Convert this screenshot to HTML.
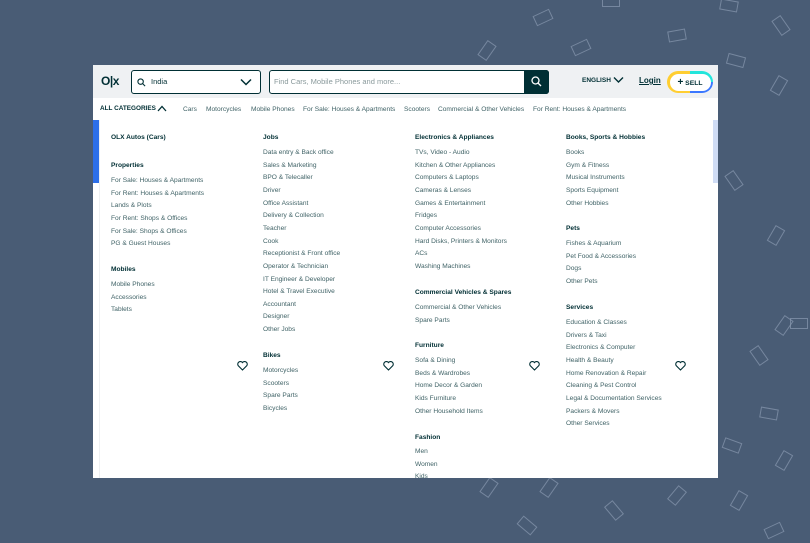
<!DOCTYPE html>
<html><head><meta charset="utf-8"><style>
*{margin:0;padding:0;box-sizing:border-box}
body{width:810px;height:543px;background:#495c75;font-family:"Liberation Sans",sans-serif;position:relative;overflow:hidden}
.r{position:absolute;border:1.5px solid #8a9ab0;opacity:.7;width:18px;height:11px}
#p{position:absolute;left:93px;top:65px;width:625px;height:413px;background:#fff}
#hd{position:absolute;left:0;top:0;width:625px;height:33px;background:#eff1f3}
.t{position:absolute;font-size:6.6px;color:#406367;white-space:nowrap}
.h{position:absolute;font-size:6.6px;color:#002f34;font-weight:bold;white-space:nowrap}
.n{position:absolute;font-size:6.6px;color:#406367;white-space:nowrap;top:40px}
</style></head><body>
<div class="r" style="left:534px;top:12px;transform:rotate(-25deg)"></div>
<div class="r" style="left:478px;top:45px;transform:rotate(-55deg)"></div>
<div class="r" style="left:572px;top:42px;transform:rotate(-25deg)"></div>
<div class="r" style="left:668px;top:30px;transform:rotate(-10deg)"></div>
<div class="r" style="left:727px;top:55px;transform:rotate(15deg)"></div>
<div class="r" style="left:772px;top:20px;transform:rotate(55deg)"></div>
<div class="r" style="left:770px;top:80px;transform:rotate(-60deg)"></div>
<div class="r" style="left:720px;top:0px;transform:rotate(10deg)"></div>
<div class="r" style="left:602px;top:-4px;transform:rotate(0deg)"></div>
<div class="r" style="left:725px;top:175px;transform:rotate(55deg)"></div>
<div class="r" style="left:767px;top:230px;transform:rotate(-60deg)"></div>
<div class="r" style="left:775px;top:320px;transform:rotate(-55deg)"></div>
<div class="r" style="left:790px;top:318px;transform:rotate(0deg)"></div>
<div class="r" style="left:750px;top:350px;transform:rotate(55deg)"></div>
<div class="r" style="left:760px;top:408px;transform:rotate(10deg)"></div>
<div class="r" style="left:775px;top:455px;transform:rotate(-60deg)"></div>
<div class="r" style="left:730px;top:495px;transform:rotate(-60deg)"></div>
<div class="r" style="left:765px;top:525px;transform:rotate(-25deg)"></div>
<div class="r" style="left:668px;top:490px;transform:rotate(-50deg)"></div>
<div class="r" style="left:605px;top:505px;transform:rotate(50deg)"></div>
<div class="r" style="left:540px;top:482px;transform:rotate(-55deg)"></div>
<div class="r" style="left:518px;top:520px;transform:rotate(40deg)"></div>
<div class="r" style="left:480px;top:482px;transform:rotate(-55deg)"></div>
<div class="r" style="left:723px;top:440px;transform:rotate(20deg)"></div>
<div id="p">
<div id="hd">
<div style="position:absolute;left:8px;top:9px;font-size:12px;font-weight:bold;color:#002f34;letter-spacing:-0.5px">O|x</div>
<div style="position:absolute;left:38px;top:5px;width:130px;height:24px;border:1.5px solid #002f34;border-radius:3px;background:#fff">
<svg style="position:absolute;left:5px;top:7px" width="9" height="9" viewBox="0 0 10 10"><circle cx="4" cy="4" r="3" fill="none" stroke="#002f34" stroke-width="1.2"/><path d="M6.3 6.3L9 9" stroke="#002f34" stroke-width="1.2"/></svg>
<span style="position:absolute;left:19px;top:6px;font-size:7.5px;color:#002f34">India</span>
<svg style="position:absolute;left:108px;top:7px" width="12" height="8" viewBox="0 0 12 8"><path d="M1 1.5L6 6.5 11 1.5" fill="none" stroke="#002f34" stroke-width="1.5"/></svg>
</div>
<div style="position:absolute;left:176px;top:5px;width:280px;height:24px;border:1.5px solid #002f34;border-radius:3px;background:#fff">
<span style="position:absolute;left:4px;top:6px;font-size:7.5px;color:#8a9a9c">Find Cars, Mobile Phones and more...</span>
<div style="position:absolute;right:-1px;top:-1.5px;width:25px;height:24px;background:#002f34;border-radius:0 3px 3px 0">
<svg style="position:absolute;left:7px;top:6px" width="11" height="11" viewBox="0 0 11 11"><circle cx="4.5" cy="4.5" r="3.5" fill="none" stroke="#fff" stroke-width="1.3"/><path d="M7 7L10 10" stroke="#fff" stroke-width="1.3"/></svg>
</div></div>
<span style="position:absolute;left:489px;top:12px;font-size:6.5px;font-weight:bold;color:#002f34">ENGLISH</span>
<svg style="position:absolute;left:520px;top:11px" width="11" height="8" viewBox="0 0 11 8"><path d="M1 1.5L5.5 6 10 1.5" fill="none" stroke="#002f34" stroke-width="1.4"/></svg>
<span style="position:absolute;left:546px;top:11px;font-size:8px;font-weight:bold;color:#002f34;text-decoration:underline">Login</span>
<div style="position:absolute;left:574px;top:6px;width:46px;height:22px;border-radius:11px;background:conic-gradient(from 180deg,#ffce32 0 50%,#23e5db 50% 75%,#3a77ff 75%);padding:2.5px">
<div style="width:100%;height:100%;background:#fff;border-radius:9px;font-size:6.8px;font-weight:bold;color:#002f34;text-align:center;line-height:17px"><span style="font-size:10px">+</span> SELL</div></div>
</div>
<div class="h" style="left:7px;top:40px;font-size:6.4px">ALL CATEGORIES</div>
<svg style="position:absolute;left:64px;top:40px" width="10" height="7" viewBox="0 0 10 7"><path d="M1 6L5 1.5 9 6" fill="none" stroke="#002f34" stroke-width="1.3"/></svg>
<div class="n" style="left:90px;top:41px">Cars</div><div class="n" style="left:113px;top:41px">Motorcycles</div><div class="n" style="left:158px;top:41px">Mobile Phones</div><div class="n" style="left:210px;top:41px">For Sale: Houses &amp; Apartments</div><div class="n" style="left:311px;top:41px">Scooters</div><div class="n" style="left:345px;top:41px">Commercial &amp; Other Vehicles</div><div class="n" style="left:440px;top:41px">For Rent: Houses &amp; Apartments</div>
<div style="position:absolute;left:0;top:55px;width:7px;height:63px;background:#2d6fe8"></div>
<div style="position:absolute;left:6px;top:55px;width:1px;height:358px;background:#eef0f2"></div>
<div style="position:absolute;left:620px;top:55px;width:5px;height:63px;background:#cfdcf5"></div>
<div id="c"></div>
</div>
<script>
const cols=[[18,[["h",71,"OLX Autos (Cars)"],["h",99,"Properties"],["t",114,"For Sale: Houses & Apartments","For Rent: Houses & Apartments","Lands & Plots","For Rent: Shops & Offices","For Sale: Shops & Offices","PG & Guest Houses"],["h",203,"Mobiles"],["t",218,"Mobile Phones","Accessories","Tablets"]]],
[170,[["h",71,"Jobs"],["t",86,"Data entry & Back office","Sales & Marketing","BPO & Telecaller","Driver","Office Assistant","Delivery & Collection","Teacher","Cook","Receptionist & Front office","Operator & Technician","IT Engineer & Developer","Hotel & Travel Executive","Accountant","Designer","Other Jobs"],["h",289,"Bikes"],["t",304,"Motorcycles","Scooters","Spare Parts","Bicycles"]]],
[322,[["h",71,"Electronics & Appliances"],["t",86,"TVs, Video - Audio","Kitchen & Other Appliances","Computers & Laptops","Cameras & Lenses","Games & Entertainment","Fridges","Computer Accessories","Hard Disks, Printers & Monitors","ACs","Washing Machines"],["h",226,"Commercial Vehicles & Spares"],["t",241,"Commercial & Other Vehicles","Spare Parts"],["h",279,"Furniture"],["t",294,"Sofa & Dining","Beds & Wardrobes","Home Decor & Garden","Kids Furniture","Other Household Items"],["h",371,"Fashion"],["t",385,"Men","Women","Kids"]]],
[473,[["h",71,"Books, Sports & Hobbies"],["t",86,"Books","Gym & Fitness","Musical Instruments","Sports Equipment","Other Hobbies"],["h",162,"Pets"],["t",177,"Fishes & Aquarium","Pet Food & Accessories","Dogs","Other Pets"],["h",241,"Services"],["t",256,"Education & Classes","Drivers & Taxi","Electronics & Computer","Health & Beauty","Home Renovation & Repair","Cleaning & Pest Control","Legal & Documentation Services","Packers & Movers","Other Services"]]]];
let h="";
for(const [x,g] of cols){for(const it of g){const [c,y,...items]=it;items.forEach((s,i)=>{h+=`<div class="${c}" style="left:${x}px;top:${y-2+i*12.65}px">${s.replace(/&/g,"&amp;")}</div>`;});}}
[149,295,441,587].forEach(x=>{h+=`<svg style="position:absolute;left:${x-5}px;top:296px" width="11" height="10" viewBox="0 0 11 10"><path d="M5.5 9L1.3 4.8A2.4 2.4 0 0 1 5.5 1.6 2.4 2.4 0 0 1 9.7 4.8Z" fill="none" stroke="#002f34" stroke-width="1.1"/></svg>`;});
document.getElementById("c").outerHTML=h;
</script>
</body></html>
